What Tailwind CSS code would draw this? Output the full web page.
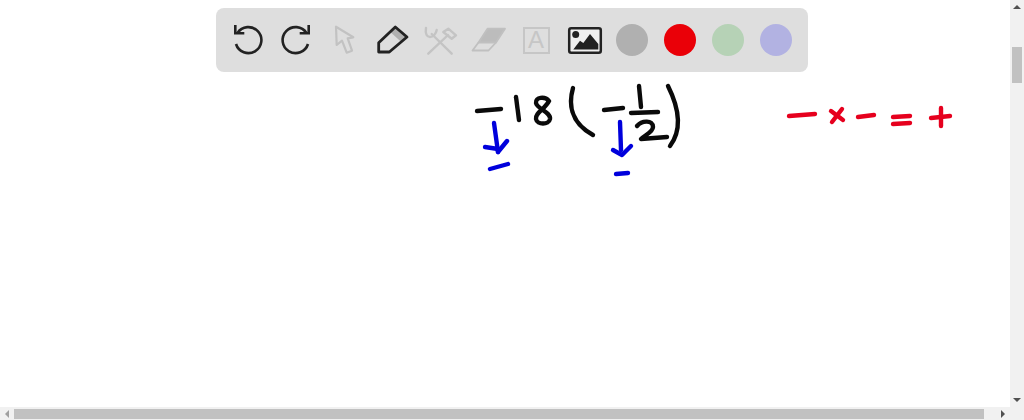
<!DOCTYPE html>
<html lang="en">
<head>
    <meta charset="UTF-8">
    <meta name="viewport" content="width=device-width, initial-scale=1.0">
    <title>Whiteboard</title>
    <script src="https://cdn.jsdelivr.net/npm/@tailwindcss/browser@4"></script>
</head>
<body class="bg-white overflow-hidden">

    <div class="grid grid-cols-[1010px_14px] grid-rows-[407px_13px] w-[1024px] h-[420px]">

        <!-- board -->
        <main class="relative bg-white overflow-hidden">
            <svg class="absolute inset-0" width="1010" height="407" fill="none" stroke-linecap="round" stroke-linejoin="round">
                <g stroke="#0a0a0a" stroke-width="4.4">
                    <path d="M477 111 L501 109" />
                    <path d="M516 97 L519 120" />
                    <path d="M549 101 C545 96 535 97 536 103 C537 109 551 112 550 119 C549 125 537 125 536 119 C535 113 545 109 549 101" />
                    <path d="M573 88 C569 102 569 122 593 135" />
                    <path d="M604 110 L623 108" />
                    <path d="M639 86 L641 107" />
                    <path d="M631 113 L658 112" />
                    <path d="M637 126 C642 120 653 120 653 127 C653 132 645 135 641 139 L667 137" />
                    <path d="M668 86 C680 110 682 130 670 146" />
                </g>
                <g stroke="#0000dc" stroke-width="4.4">
                    <path d="M494 123 L498 152" />
                    <path d="M485 147 L498 149" />
                    <path d="M507 141 L498 152" />
                    <path d="M490 169 L508 164" />
                    <path d="M620 122 L621 150" />
                    <path d="M613 150 L622 155 L631 146" />
                    <path d="M616 174 L628 173" />
                </g>
                <g stroke="#e6001e" stroke-width="4.4">
                    <path d="M789 116 L815 114" />
                    <path d="M831 111 L843 120" />
                    <path d="M842 109 L832 122" />
                    <path d="M858 117 L874 115" />
                    <path d="M893 117 L910 116" />
                    <path d="M893 124 L910 123" />
                    <path d="M931 118 L950 116" />
                    <path d="M941 108 L941 126" />
                </g>
            </svg>

            <!-- toolbar -->
            <div class="absolute left-[216px] top-2 w-[592px] h-16 px-2 flex items-center bg-[#dedede] rounded-lg">
                <div class="w-12 h-12 flex items-center justify-center">
                    <svg class="w-8 h-8 overflow-visible" viewBox="0 0 32 32" fill="none" stroke="#222" stroke-width="2.6">
                        <path d="M5.5 9 A13 13 0 1 1 4 20" />
                        <path d="M3.3 1 V9.3 H12.3" />
                    </svg>
                </div>
                <div class="w-12 h-12 flex items-center justify-center">
                    <svg class="w-8 h-8 overflow-visible -scale-x-100" viewBox="0 0 32 32" fill="none" stroke="#222" stroke-width="2.6">
                        <path d="M5.5 9 A13 13 0 1 1 4 20" />
                        <path d="M3.3 1 V9.3 H12.3" />
                    </svg>
                </div>
                <div class="w-12 h-12 flex items-center justify-center">
                    <svg class="w-8 h-8 overflow-visible" viewBox="0 0 32 32" fill="none" stroke="#c2c2c2" stroke-width="2.2" stroke-linejoin="round">
                        <path d="M8 2.7 L8.7 21 L14 16.7 L18.7 28.7 L24 26.7 L19.7 14.3 L25.3 13.3 Z" />
                    </svg>
                </div>
                <div class="w-12 h-12 flex items-center justify-center">
                    <svg class="w-8 h-8 overflow-visible" viewBox="0 0 32 32" fill="none" stroke="#222" stroke-width="2.8" stroke-linejoin="round">
                        <path d="M19.3 3 L31 13 L25.3 18 L14.3 8 Z" fill="#b0b0b0" stroke="none" />
                        <path d="M2.7 18.7 L19.3 3 L31 13 L13.3 28 H2.7 Z" />
                    </svg>
                </div>
                <div class="w-12 h-12 flex items-center justify-center">
                    <svg class="w-8 h-8 overflow-visible" viewBox="0 0 32 32" fill="none" stroke="#c4c4c4" stroke-width="2.4" stroke-linecap="round" stroke-linejoin="round">
                        <path d="M7.7 10 L27.7 29.7" />
                        <path d="M24 11 L4.3 29.7" />
                        <path d="M2 4 C1 10 3 13 6 13 C9 13 12 10 12.7 6" />
                        <path d="M19.3 8 L24.3 4.7 L32 11.3 L27.7 14.7 Z" />
                    </svg>
                </div>
                <div class="w-12 h-12 flex items-center justify-center">
                    <svg class="w-8 h-8 overflow-visible" viewBox="0 0 32 32" fill="none" stroke="#c0c0c0" stroke-width="1.8" stroke-linejoin="round">
                        <path d="M15.5 4.7 H33 L24 18.5 H6.5 Z" fill="#bcbcbc" />
                        <path d="M6.5 18.5 L0.5 26.5 H16.5 L24 18.5" />
                    </svg>
                </div>
                <div class="w-12 h-12 flex items-center justify-center">
                    <div class="w-[27px] h-[27px] flex items-center justify-center border-2 border-[#c6c6c6] text-[24px] leading-none text-[#c6c6c6] font-['Liberation_Sans',sans-serif]">A</div>
                </div>
                <div class="w-12 h-12 flex items-center justify-center">
                    <svg class="ml-[1px] w-[34px] h-[27px] overflow-visible" viewBox="0 0 34 27">
                        <rect x="1.2" y="1.2" width="31.6" height="24.6" rx="2" fill="#f0f0f0" stroke="#222" stroke-width="2.5" />
                        <circle cx="7.7" cy="7.5" r="3.5" fill="#222" />
                        <path d="M5.3 22.5 L12 13.8 L15.3 16 L22 7 L30.3 17 V22.5 Z" fill="#222" />
                    </svg>
                </div>
                <div class="w-12 h-12 flex items-center justify-center"><div class="w-8 h-8 rounded-full bg-[#b0b0b0]"></div></div>
                <div class="w-12 h-12 flex items-center justify-center"><div class="w-8 h-8 rounded-full bg-[#ea0008]"></div></div>
                <div class="w-12 h-12 flex items-center justify-center"><div class="w-8 h-8 rounded-full bg-[#b6d2b6]"></div></div>
                <div class="w-12 h-12 flex items-center justify-center"><div class="w-8 h-8 rounded-full bg-[#b2b2e2]"></div></div>
            </div>
        </main>

        <!-- vertical scrollbar -->
        <div class="flex flex-col items-center bg-[#f1f1f1]">
            <div class="h-[14px] flex items-center justify-center">
                <div class="w-0 h-0 border-x-[4px] border-x-transparent border-b-[4px] border-b-[#505050]"></div>
            </div>
            <div class="flex-1 w-full px-[2px] pt-[33px]">
                <div class="h-[36px] bg-[#c1c1c1]"></div>
            </div>
            <div class="h-[14px] flex items-center justify-center">
                <div class="w-0 h-0 border-x-[4px] border-x-transparent border-t-[4px] border-t-[#505050]"></div>
            </div>
        </div>

        <!-- horizontal scrollbar -->
        <div class="flex items-center bg-[#f1f1f1]">
            <div class="w-[14px] flex items-center justify-center">
                <div class="w-0 h-0 border-y-[4px] border-y-transparent border-r-[4px] border-r-[#a0a0a0]"></div>
            </div>
            <div class="flex-1 h-[10px]">
                <div class="w-[970px] h-full bg-[#c1c1c1]"></div>
            </div>
            <div class="w-[14px] flex items-center justify-center">
                <div class="w-0 h-0 border-y-[4px] border-y-transparent border-l-[4px] border-l-[#505050]"></div>
            </div>
        </div>
        <div class="bg-[#f1f1f1]"></div>
    </div>

</body>
</html>
